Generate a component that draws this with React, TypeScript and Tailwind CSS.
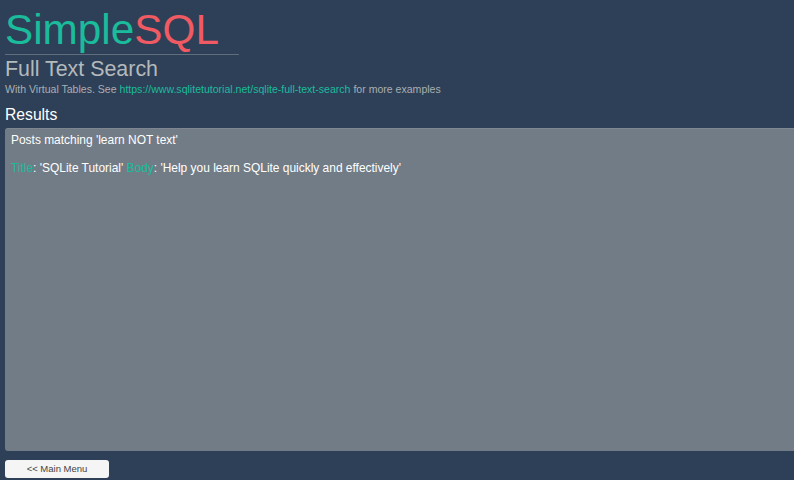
export default function App() {
  return (
    <div className="w-[794px] h-[480px] overflow-hidden bg-[#2e4057] font-['Liberation_Sans',Arial,sans-serif] flex flex-col pl-[5px]">
      <div className="text-[42.3px] leading-[48px] h-[48px] mt-[6px]">
        <span className="text-[#1abc9c]">Simple</span>
        <span className="text-[#f05a62]">SQL</span>
      </div>
      <div className="w-[234px] h-px bg-[#5f6e7a]" />
      <div className="text-[21.4px] leading-[26px] mt-[1px] text-[#b4b9bc]">Full Text Search</div>
      <div className="text-[10.55px] leading-[14px] text-[#a9afb3]">
        With Virtual Tables. See <span className="text-[#1abc9c]">https://www.sqlitetutorial.net/sqlite-full-text-search</span> for more examples
      </div>
      <div className="text-[15.7px] leading-[20px] mt-[9px] text-white">Results</div>
      <div className="mt-[3px] w-[800px] h-[323px] rounded-[3px] bg-[#727c86] border-t border-[#7e8791] pl-[6px] pt-[4px] text-[11.95px] leading-[15px] text-white">
        <div>Posts matching 'learn NOT text'</div>
        <div className="mt-[13px]">
          <span className="text-[#1abc9c]">Title</span>: 'SQLite Tutorial' <span className="text-[#1abc9c]">Body</span>: 'Help you learn SQLite quickly and effectively'
        </div>
      </div>
      <button className="mt-[9px] w-[104px] h-[18px] rounded-[3px] bg-[#f5f5f5] text-[#444] text-[9.5px] leading-[18px] text-center">
        &lt;&lt; Main Menu
      </button>
    </div>
  );
}
